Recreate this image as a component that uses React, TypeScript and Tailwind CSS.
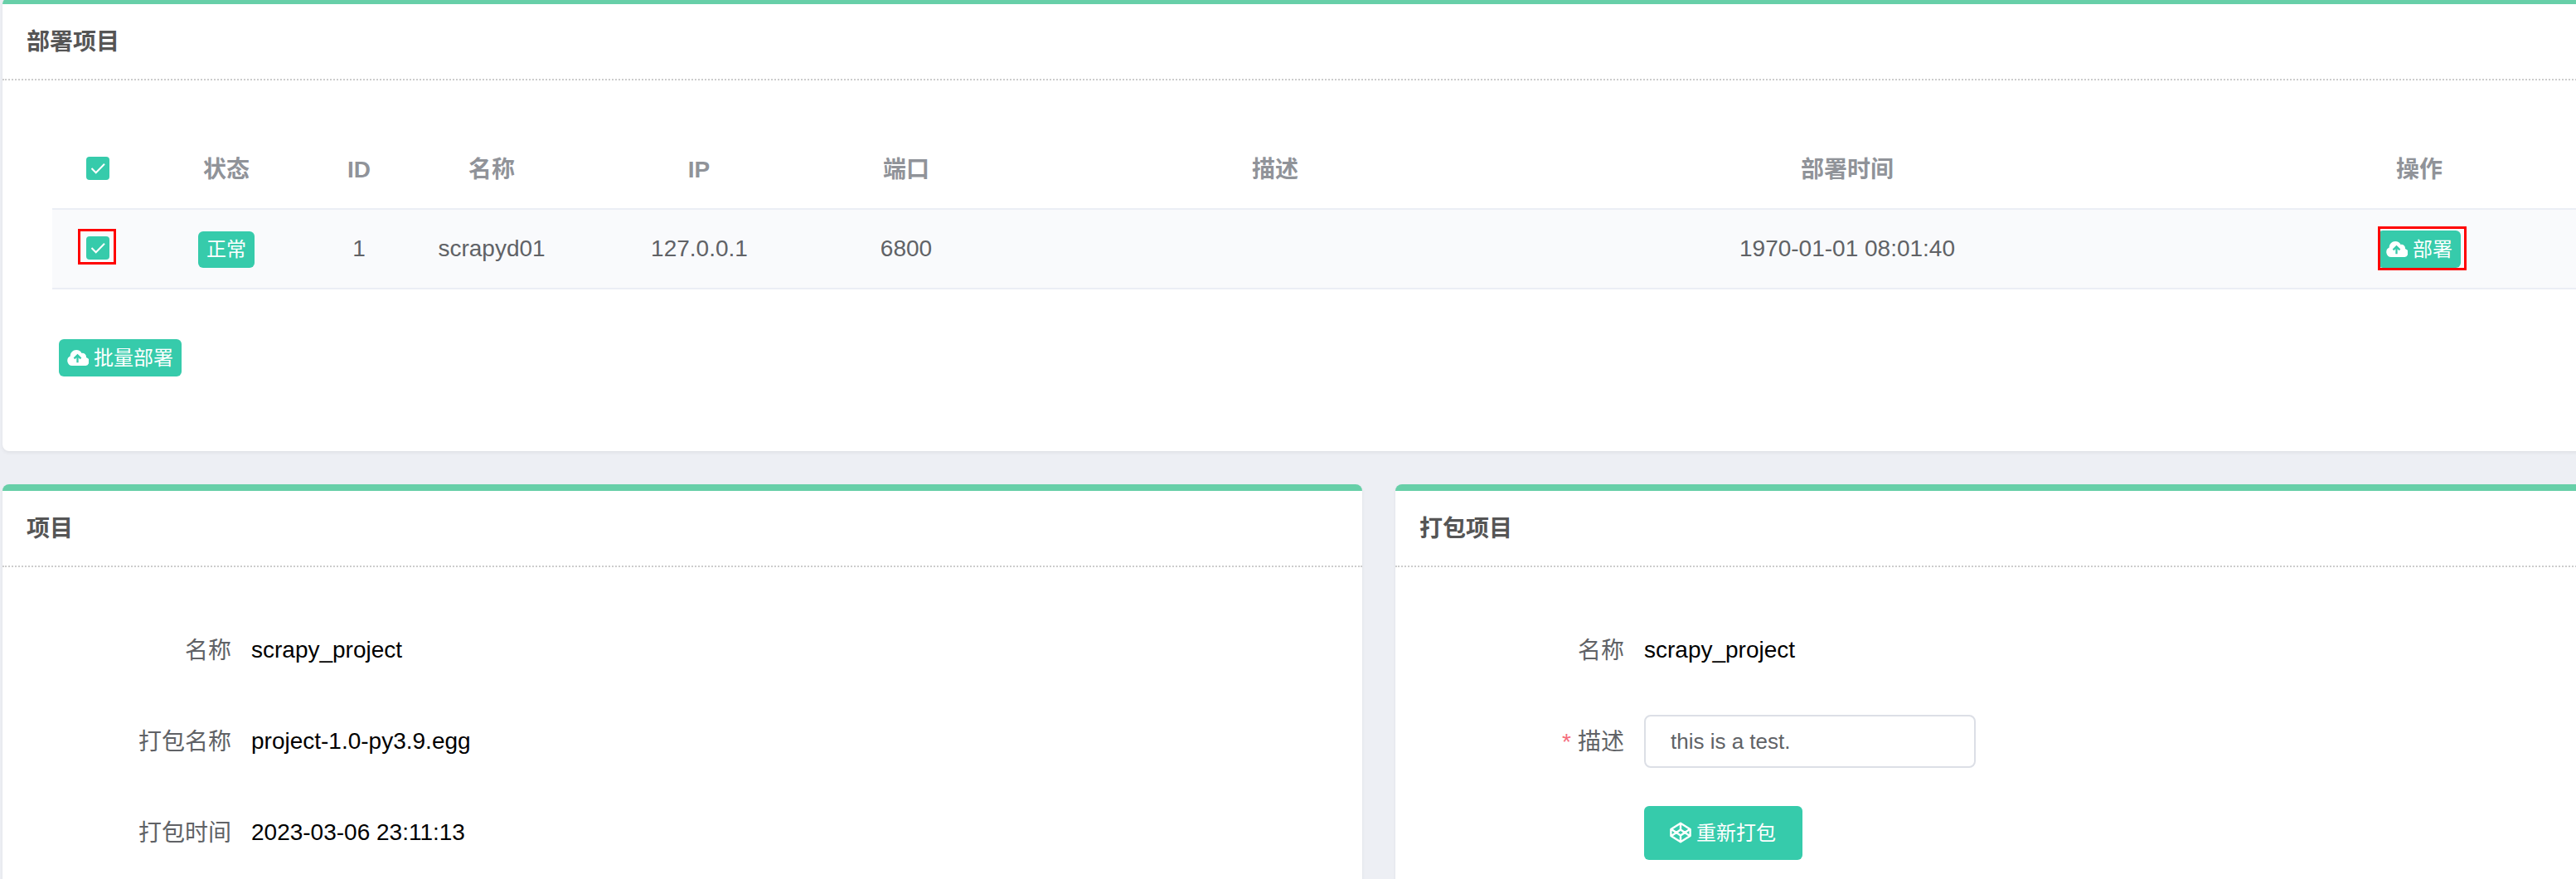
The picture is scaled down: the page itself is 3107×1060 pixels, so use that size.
import type { ReactNode } from 'react';

const columns = [
  { key: 'status', label: '状态', width: 'w-[200px]' },
  { key: 'id', label: 'ID', width: 'w-[120px]' },
  { key: 'name', label: '名称', width: 'w-[200px]' },
  { key: 'ip', label: 'IP', width: 'w-[300px]' },
  { key: 'port', label: '端口', width: 'w-[200px]' },
  { key: 'desc', label: '描述', width: 'w-[690px]' },
  { key: 'time', label: '部署时间', width: 'w-[690px]' },
  { key: 'action', label: '操作', width: 'w-[690px]' },
];

function CloudUploadIcon() {
  return (
    <svg className="h-[19px] w-[26px] shrink-0" viewBox="0 0 26 19" aria-hidden="true">
      <path
        d="M6 19a6 6 0 0 1-2.3-11.4C3.7 3.2 7 0 11 0c3 0 5.4 1.5 6.6 3.9a4.6 4.6 0 0 1 5.4 5A5.2 5.2 0 0 1 20.8 19z"
        fill="currentColor"
      />
      <path d="M12.5 15.3V7M8.5 10.4l4-4 4 4" fill="none" stroke="#36cbab" strokeWidth={2.3} />
    </svg>
  );
}

function CodepenIcon() {
  return (
    <svg className="size-[26px] shrink-0" viewBox="0 0 26 26" fill="none" stroke="currentColor" strokeWidth={2.4} strokeLinejoin="round" aria-hidden="true">
      <path d="M13 1.7 24.6 9v8L13 24.3 1.4 17V9zM13 2v7.5M13 16.5V24M2 9l11 7.5L24 9M2 17l11-7.5L24 17" />
    </svg>
  );
}

function Checkbox() {
  return (
    <span className="flex size-7 items-center justify-center rounded bg-[#36cbab]">
      <svg className="size-7" viewBox="0 0 28 28" fill="none" stroke="#fff" strokeWidth={2} aria-hidden="true">
        <path d="M6.5 14 11.7 19.3 22 8.7" />
      </svg>
    </span>
  );
}

function Card({ title, className, children }: { title: string; className: string; children?: ReactNode }) {
  return (
    <section className={`shrink-0 rounded-lg border-t-8 border-[#67cfa8] bg-white shadow-[0_2px_4px_rgba(0,0,0,0.06)] ${className}`}>
      <h2 className="flex h-[92px] items-center border-b-2 border-dotted border-[#ccc] pt-px pl-[29px] text-[28px] font-bold text-[#555]">
        {title}
      </h2>
      {children}
    </section>
  );
}

function FormItem({ label, required, children }: { label: string; required?: boolean; children: ReactNode }) {
  return (
    <div className="flex h-[66px] items-center">
      <div className="w-[276px] pt-0.5 text-right text-[28px] text-[#606266]">
        {required && <span className="mr-2 text-[#f56c7c]">*</span>}
        {label}
      </div>
      <div className="ml-6 text-[28px] text-black">{children}</div>
    </div>
  );
}

export default function App() {
  return (
    <div className="h-[1060px] w-full overflow-hidden bg-[#edeff4] pl-[3px] font-['Liberation_Sans','Noto_Sans_CJK_SC',sans-serif]">
      <Card title="部署项目" className="-mt-[3px] h-[547px] w-[3320px]">
        <div className="ml-[60px] w-[3200px] pt-[60px] text-[28px]">
          <div className="flex h-24 items-center border-b-2 border-[#ebeef5] text-center font-bold text-[#909399]">
            <div className="flex w-[110px] justify-center pb-0.5">
              <Checkbox />
            </div>
            {columns.map((c) => (
              <div key={c.key} className={`pt-px ${c.width}`}>{c.label}</div>
            ))}
          </div>
          <div className="flex h-24 items-center border-b-2 border-[#ebeef5] bg-[#f9fafc] text-center text-[#606266]">
            <div className="flex w-[110px] justify-center pb-0.5">
              <div className="relative">
                <Checkbox />
                <div className="absolute -top-[9px] -left-[10px] h-[43px] w-[46px] border-3 border-[#f00]" />
              </div>
            </div>
            <div className="flex w-[200px] justify-center pt-0.5">
              <span className="flex h-11 w-[68px] items-center justify-center rounded-md bg-[#36cbab] text-[24px] text-white">正常</span>
            </div>
            <div className="w-[120px]">1</div>
            <div className="w-[200px]">scrapyd01</div>
            <div className="w-[300px] pl-px">127.0.0.1</div>
            <div className="w-[200px]">6800</div>
            <div className="w-[690px]" />
            <div className="w-[690px]">1970-01-01 08:01:40</div>
            <div className="flex w-[690px] justify-center pt-px">
              <div className="relative">
                <button className="flex h-[45px] w-[100px] items-center gap-[6px] rounded-md bg-[#36cbab] pl-[10px] text-[24px] text-white">
                  <CloudUploadIcon />
                  <span className="pt-px">部署</span>
                </button>
                <div className="absolute -top-[5px] left-0 h-[53px] w-[107px] border-3 border-[#f00]" />
              </div>
            </div>
          </div>
          <button className="mt-[60px] ml-2 flex h-[45px] w-[148px] items-center gap-[6px] rounded-md bg-[#36cbab] pl-[10px] text-[24px] whitespace-nowrap text-white">
            <CloudUploadIcon />
            <span className="pt-px">批量部署</span>
          </button>
        </div>
      </Card>

      <div className="mt-10 flex gap-10">
        <Card title="项目" className="h-[520px] w-[1640px]">
          <div className="flex flex-col gap-11 pt-[67px]">
            <FormItem label="名称">scrapy_project</FormItem>
            <FormItem label="打包名称">project-1.0-py3.9.egg</FormItem>
            <FormItem label="打包时间">2023-03-06 23:11:13</FormItem>
          </div>
        </Card>
        <Card title="打包项目" className="h-[520px] w-[1640px]">
          <div className="flex flex-col gap-11 pt-[67px]">
            <FormItem label="名称">scrapy_project</FormItem>
            <FormItem label="描述" required>
              <input
                className="block h-16 w-[400px] rounded-lg border-2 border-[#dcdfe6] px-[30px] text-[26px] text-[#606266]"
                defaultValue="this is a test."
              />
            </FormItem>
            <FormItem label="">
              <button className="flex h-[65px] w-[191px] items-center gap-[6px] rounded-md bg-[#36cbab] pl-[31px] text-[24px] text-white">
                <CodepenIcon />
                <span className="pt-0.5">重新打包</span>
              </button>
            </FormItem>
          </div>
        </Card>
      </div>
    </div>
  );
}
